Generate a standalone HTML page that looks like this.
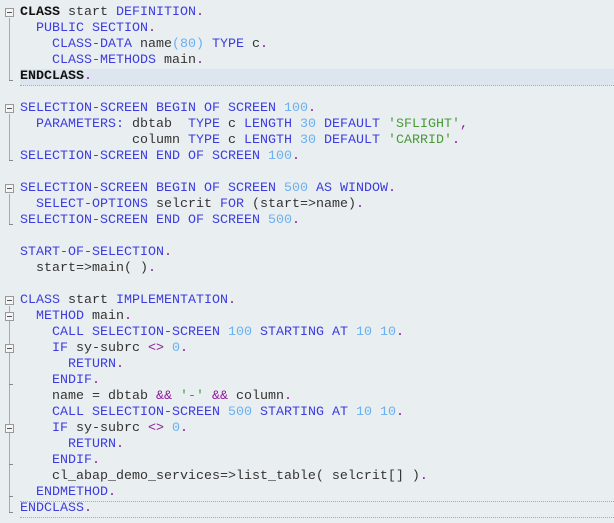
<!DOCTYPE html><html><head><style>
body{margin:0;width:614px;height:523px;background:#e9eef0;overflow:hidden;position:relative;font-family:"Liberation Mono",monospace;font-size:13.33px;}
.l{position:absolute;left:20px;height:16px;line-height:16px;white-space:pre;color:#333;}
.k{color:#3c3ce0}.n{color:#6ab0f0}.s{color:#4a9a3a}.p{color:#8a1a9a}.b{color:#111;font-weight:bold}
.hl{position:absolute;left:20px;right:0;height:16px;background:#dde5ee}
.dot{position:absolute;left:20px;right:0;border-top:1px dotted #8fb3bd;height:0}
.box{position:absolute;left:5px;width:7px;height:7px;border:1px solid #999;background:#f4f4f4}
.box:after{content:"";position:absolute;left:1px;top:3px;width:5px;height:1px;background:#555}
.v{position:absolute;left:9px;width:1px;background:#aaa}
.t{position:absolute;left:9px;width:4px;height:1px;background:#888}
</style></head><body>
<div class="hl" style="top:69px"></div>
<div class="dot" style="top:85px"></div>
<div class="dot" style="top:501px"></div>
<div class="dot" style="top:517px"></div>
<div class="v" style="top:18px;height:62px"></div><div class="t" style="top:80px"></div>
<div class="v" style="top:114px;height:46px"></div><div class="t" style="top:160px"></div>
<div class="v" style="top:194px;height:30px"></div><div class="t" style="top:224px"></div>
<div class="v" style="top:306px;height:206px"></div><div class="t" style="top:512px"></div>
<div class="t" style="top:384px"></div><div class="t" style="top:464px"></div><div class="t" style="top:496px"></div>
<div class="box" style="top:8px"></div>
<div class="box" style="top:104px"></div>
<div class="box" style="top:184px"></div>
<div class="box" style="top:296px"></div>
<div class="box" style="top:312px"></div>
<div class="box" style="top:344px"></div>
<div class="box" style="top:424px"></div>
<div class="l" style="top:5px"><span class="b">CLASS</span> start <span class="k">DEFINITION</span><span class="p">.</span></div>
<div class="l" style="top:21px">  <span class="k">PUBLIC SECTION</span><span class="p">.</span></div>
<div class="l" style="top:37px">    <span class="k">CLASS-DATA</span> name<span class="n">(80)</span> <span class="k">TYPE</span> c<span class="p">.</span></div>
<div class="l" style="top:53px">    <span class="k">CLASS-METHODS</span> main<span class="p">.</span></div>
<div class="l" style="top:69px"><span class="b">ENDCLASS</span><span class="p">.</span></div>
<div class="l" style="top:101px"><span class="k">SELECTION-SCREEN BEGIN OF SCREEN</span> <span class="n">100</span><span class="p">.</span></div>
<div class="l" style="top:117px">  <span class="k">PARAMETERS:</span> dbtab  <span class="k">TYPE</span> c <span class="k">LENGTH</span> <span class="n">30</span> <span class="k">DEFAULT</span> <span class="s">'SFLIGHT'</span><span class="p">,</span></div>
<div class="l" style="top:133px">              column <span class="k">TYPE</span> c <span class="k">LENGTH</span> <span class="n">30</span> <span class="k">DEFAULT</span> <span class="s">'CARRID'</span><span class="p">.</span></div>
<div class="l" style="top:149px"><span class="k">SELECTION-SCREEN END OF SCREEN</span> <span class="n">100</span><span class="p">.</span></div>
<div class="l" style="top:181px"><span class="k">SELECTION-SCREEN BEGIN OF SCREEN</span> <span class="n">500</span> <span class="k">AS WINDOW</span><span class="p">.</span></div>
<div class="l" style="top:197px">  <span class="k">SELECT-OPTIONS</span> selcrit <span class="k">FOR</span> (start=&gt;name)<span class="p">.</span></div>
<div class="l" style="top:213px"><span class="k">SELECTION-SCREEN END OF SCREEN</span> <span class="n">500</span><span class="p">.</span></div>
<div class="l" style="top:245px"><span class="k">START-OF-SELECTION</span><span class="p">.</span></div>
<div class="l" style="top:261px">  start=&gt;main( )<span class="p">.</span></div>
<div class="l" style="top:293px"><span class="k">CLASS</span> start <span class="k">IMPLEMENTATION</span><span class="p">.</span></div>
<div class="l" style="top:309px">  <span class="k">METHOD</span> main<span class="p">.</span></div>
<div class="l" style="top:325px">    <span class="k">CALL SELECTION-SCREEN</span> <span class="n">100</span> <span class="k">STARTING AT</span> <span class="n">10 10</span><span class="p">.</span></div>
<div class="l" style="top:341px">    <span class="k">IF</span> sy-subrc <span class="p">&lt;&gt;</span> <span class="n">0</span><span class="p">.</span></div>
<div class="l" style="top:357px">      <span class="k">RETURN</span><span class="p">.</span></div>
<div class="l" style="top:373px">    <span class="k">ENDIF</span><span class="p">.</span></div>
<div class="l" style="top:389px">    name = dbtab <span class="p">&amp;&amp;</span> <span class="s">'-'</span> <span class="p">&amp;&amp;</span> column<span class="p">.</span></div>
<div class="l" style="top:405px">    <span class="k">CALL SELECTION-SCREEN</span> <span class="n">500</span> <span class="k">STARTING AT</span> <span class="n">10 10</span><span class="p">.</span></div>
<div class="l" style="top:421px">    <span class="k">IF</span> sy-subrc <span class="p">&lt;&gt;</span> <span class="n">0</span><span class="p">.</span></div>
<div class="l" style="top:437px">      <span class="k">RETURN</span><span class="p">.</span></div>
<div class="l" style="top:453px">    <span class="k">ENDIF</span><span class="p">.</span></div>
<div class="l" style="top:469px">    cl_abap_demo_services=&gt;list_table( selcrit[] )<span class="p">.</span></div>
<div class="l" style="top:485px">  <span class="k">ENDMETHOD</span><span class="p">.</span></div>
<div class="l" style="top:501px"><span class="k">ENDCLASS</span><span class="p">.</span></div>
</body></html>
